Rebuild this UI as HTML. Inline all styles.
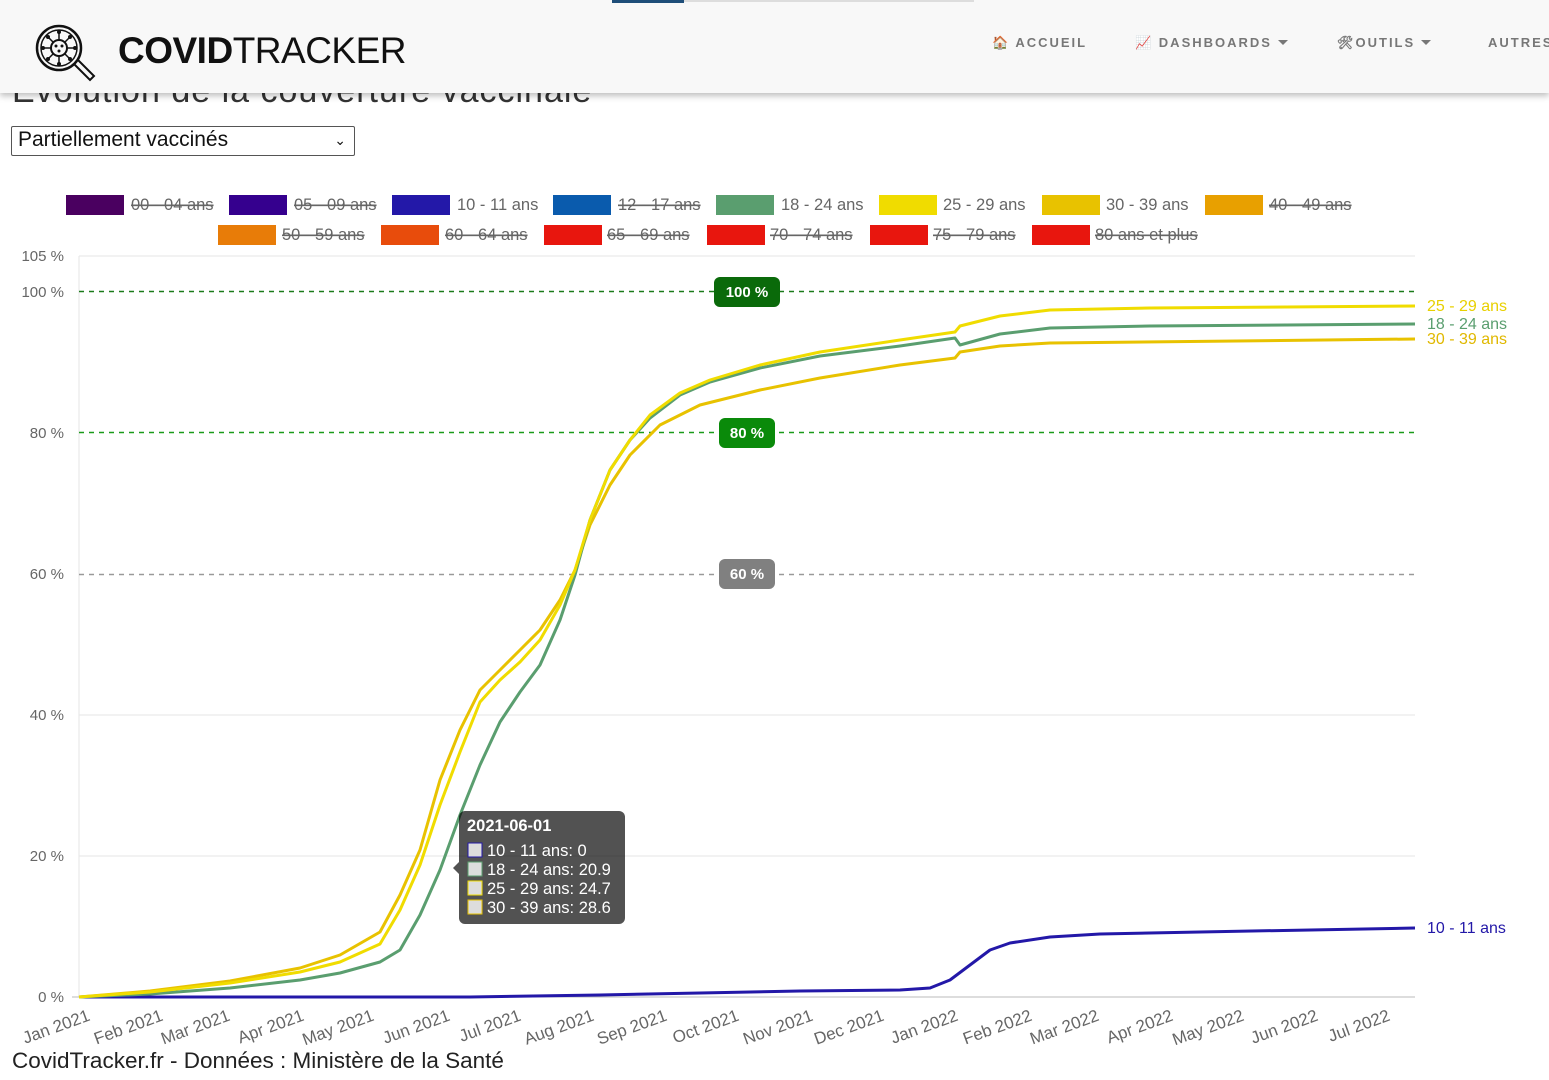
<!DOCTYPE html>
<html><head><meta charset="utf-8"><style>
body{margin:0;width:1549px;height:1080px;overflow:hidden;background:#fff;font-family:"Liberation Sans",sans-serif;position:relative}
.nav{position:absolute;left:0;top:0;width:1549px;height:93px;background:#f8f8f8;box-shadow:0 3px 6px rgba(0,0,0,.25);z-index:5}
.brand{position:absolute;left:118px;top:30px;font-size:37px;color:#111;letter-spacing:-0.5px}
.nl{position:absolute;top:35px;font-size:13px;font-weight:bold;letter-spacing:2px;color:#777}
.car{display:inline-block;width:0;height:0;border-left:5px solid transparent;border-right:5px solid transparent;border-top:5px solid #777;margin-left:6px;vertical-align:2px}
h1{position:absolute;left:12px;top:72px;margin:0;font-weight:normal;font-size:34px;color:#333;letter-spacing:1px}
.sel{position:absolute;left:11px;top:126px;width:344px;height:30px;border:1px solid #555;border-radius:2px;font-size:21px;color:#111;box-sizing:border-box;padding:1px 6px;background:#fff}
.foot{position:absolute;left:12px;top:1048px;font-size:22.5px;color:#222}
</style></head><body>
<div style="position:absolute;left:612px;top:0;width:72px;height:3px;background:#1f4e79;z-index:6"></div>
<div style="position:absolute;left:684px;top:0;width:290px;height:2px;background:#ddd;z-index:6"></div>
<div class="nav">
<svg style="position:absolute;left:32px;top:22px" width="64" height="60" viewBox="0 0 64 60">
<circle cx="27" cy="26" r="22" fill="none" stroke="#111" stroke-width="2.5"/>
<circle cx="27" cy="26" r="18" fill="none" stroke="#111" stroke-width="1.5"/>
<path d="M42 42 L58 58 L62 54 L46 38" fill="none" stroke="#111" stroke-width="2"/>
<circle cx="27" cy="26" r="8" fill="none" stroke="#111" stroke-width="2"/>
<g stroke="#111" stroke-width="1.5"><path d="M27 18V10M27 34V42M19 26H11M35 26H43M21 20L16 15M33 20L38 15M21 32L16 37M33 32L38 37"/></g>
<g fill="#111"><circle cx="27" cy="10" r="2"/><circle cx="27" cy="42" r="2"/><circle cx="11" cy="26" r="2"/><circle cx="43" cy="26" r="2"/><circle cx="16" cy="15" r="2"/><circle cx="38" cy="15" r="2"/><circle cx="16" cy="37" r="2"/><circle cx="38" cy="37" r="2"/><circle cx="24" cy="24" r="1.5"/><circle cx="30" cy="24" r="1.5"/><circle cx="27" cy="29" r="1.5"/></g>
</svg>
<div class="brand"><b>COVID</b>TRACKER</div>
<div class="nl" style="left:992px">🏠 ACCUEIL</div>
<div class="nl" style="left:1135px">📈 DASHBOARDS<span class="car"></span></div>
<div class="nl" style="left:1337px">🛠OUTILS<span class="car"></span></div>
<div class="nl" style="left:1488px">AUTRES</div>
</div>
<h1>Evolution de la couverture vaccinale</h1>
<div class="sel">Partiellement vaccinés<span style="position:absolute;right:8px;top:5px;font-size:14px">⌄</span></div>
<svg style="position:absolute;left:0;top:0" width="1549" height="1080" font-family="Liberation Sans, sans-serif">
<g font-size="16.5" fill="#666">
<rect x="66" y="195" width="58" height="20" fill="#4a0060"/><text x="131" y="210" text-decoration="line-through">00 - 04 ans</text>
<rect x="229" y="195" width="58" height="20" fill="#35008e"/><text x="294" y="210" text-decoration="line-through">05 - 09 ans</text>
<rect x="392" y="195" width="58" height="20" fill="#2318a8"/><text x="457" y="210">10 - 11 ans</text>
<rect x="553" y="195" width="58" height="20" fill="#0a5bad"/><text x="618" y="210" text-decoration="line-through">12 - 17 ans</text>
<rect x="716" y="195" width="58" height="20" fill="#5a9e6f"/><text x="781" y="210">18 - 24 ans</text>
<rect x="879" y="195" width="58" height="20" fill="#f0dc00"/><text x="943" y="210">25 - 29 ans</text>
<rect x="1042" y="195" width="58" height="20" fill="#e8c200"/><text x="1106" y="210">30 - 39 ans</text>
<rect x="1205" y="195" width="58" height="20" fill="#e8a000"/><text x="1269" y="210" text-decoration="line-through">40 - 49 ans</text>
<rect x="218" y="225" width="58" height="20" fill="#e87c08"/><text x="282" y="240" text-decoration="line-through">50 - 59 ans</text>
<rect x="381" y="225" width="58" height="20" fill="#e84c0c"/><text x="445" y="240" text-decoration="line-through">60 - 64 ans</text>
<rect x="544" y="225" width="58" height="20" fill="#e8160e"/><text x="607" y="240" text-decoration="line-through">65 - 69 ans</text>
<rect x="707" y="225" width="58" height="20" fill="#e8160e"/><text x="770" y="240" text-decoration="line-through">70 - 74 ans</text>
<rect x="870" y="225" width="58" height="20" fill="#e8160e"/><text x="933" y="240" text-decoration="line-through">75 - 79 ans</text>
<rect x="1032" y="225" width="58" height="20" fill="#e8160e"/><text x="1095" y="240" text-decoration="line-through">80 ans et plus</text>
</g>
<g stroke="#e6e6e6" stroke-width="1">
<line x1="79" y1="256" x2="1415" y2="256"/><line x1="79" y1="715" x2="1415" y2="715"/><line x1="79" y1="856" x2="1415" y2="856"/>
</g>
<line x1="79" y1="256" x2="79" y2="997" stroke="#e6e6e6"/>
<line x1="72" y1="997" x2="1415" y2="997" stroke="#bbb"/>
<g font-size="15" fill="#666" text-anchor="end">
<text x="64" y="261">105 %</text><text x="64" y="297">100 %</text><text x="64" y="438">80 %</text><text x="64" y="579">60 %</text><text x="64" y="720">40 %</text><text x="64" y="861">20 %</text><text x="64" y="1002">0 %</text>
</g>
<line x1="79" y1="291.5" x2="1415" y2="291.5" stroke="#1a7a1a" stroke-width="1.5" stroke-dasharray="5,5"/>
<line x1="79" y1="432.5" x2="1415" y2="432.5" stroke="#1a9a1a" stroke-width="1.5" stroke-dasharray="5,5"/>
<line x1="79" y1="574.5" x2="1415" y2="574.5" stroke="#999" stroke-width="1.5" stroke-dasharray="5,5"/>
<rect x="714" y="277" width="66" height="30" rx="6" fill="#0a6a0a"/><text x="747" y="297" fill="#fff" font-weight="bold" font-size="15" text-anchor="middle">100 %</text>
<rect x="719" y="418" width="56" height="30" rx="6" fill="#0a8a0a"/><text x="747" y="438" fill="#fff" font-weight="bold" font-size="15" text-anchor="middle">80 %</text>
<rect x="719" y="559" width="56" height="30" rx="6" fill="#808080"/><text x="747" y="579" fill="#fff" font-weight="bold" font-size="15" text-anchor="middle">60 %</text>
<g fill="none" stroke-width="3" stroke-linejoin="round">
<polyline stroke="#2318a8" points="79,997 470,997 600,995 700,993 800,991 900,990 930,988 950,980 970,965 990,950 1010,943 1050,937 1100,934 1200,932 1415,928"/>
<polyline stroke="#e8c200" points="79,997 150,991 230,981 300,968 340,955 380,932 400,895 420,850 440,780 460,730 480,690 500,670 520,650 540,630 560,600 575,570 590,525 610,485 630,455 660,425 700,405 760,390 820,378 900,365 955,358 960,352 1000,346 1050,343 1415,339"/>
<polyline stroke="#5a9e6f" points="79,997 150,994 230,988 300,980 340,973 380,962 400,950 420,915 440,870 460,815 480,765 500,722 520,692 540,665 560,620 575,575 590,520 610,470 630,440 650,418 680,395 710,382 760,368 820,356 900,346 955,338 960,345 1000,334 1050,328 1150,326 1415,324"/>
<polyline stroke="#f0dc00" points="79,997 150,992 230,983 300,972 340,962 380,944 400,910 420,865 440,805 460,752 480,702 500,680 520,662 540,640 560,605 575,570 590,520 610,470 630,440 650,415 680,393 710,380 760,365 820,352 900,340 955,332 960,326 1000,316 1050,310 1150,308 1415,306"/>
</g>
<g font-size="16">
<text x="1427" y="311" fill="#e8d000">25 - 29 ans</text>
<text x="1427" y="329" fill="#5a9e6f">18 - 24 ans</text>
<text x="1427" y="344" fill="#e0b800">30 - 39 ans</text>
<text x="1427" y="933" fill="#2318a8">10 - 11 ans</text>
</g>
<g font-size="17" fill="#666" text-anchor="end">
<text transform="translate(91,1020) rotate(-20)">Jan 2021</text>
<text transform="translate(164,1020) rotate(-20)">Feb 2021</text>
<text transform="translate(231,1020) rotate(-20)">Mar 2021</text>
<text transform="translate(305,1020) rotate(-20)">Apr 2021</text>
<text transform="translate(375,1020) rotate(-20)">May 2021</text>
<text transform="translate(451,1020) rotate(-20)">Jun 2021</text>
<text transform="translate(522,1020) rotate(-20)">Jul 2021</text>
<text transform="translate(595,1020) rotate(-20)">Aug 2021</text>
<text transform="translate(668,1020) rotate(-20)">Sep 2021</text>
<text transform="translate(740,1020) rotate(-20)">Oct 2021</text>
<text transform="translate(814,1020) rotate(-20)">Nov 2021</text>
<text transform="translate(885,1020) rotate(-20)">Dec 2021</text>
<text transform="translate(959,1020) rotate(-20)">Jan 2022</text>
<text transform="translate(1033,1020) rotate(-20)">Feb 2022</text>
<text transform="translate(1100,1020) rotate(-20)">Mar 2022</text>
<text transform="translate(1174,1020) rotate(-20)">Apr 2022</text>
<text transform="translate(1245,1020) rotate(-20)">May 2022</text>
<text transform="translate(1319,1020) rotate(-20)">Jun 2022</text>
<text transform="translate(1391,1020) rotate(-20)">Jul 2022</text>
</g>
<rect x="459" y="811" width="166" height="113" rx="6" fill="#000" fill-opacity="0.68"/>
<path d="M459 862 L453 868 L459 874Z" fill="#000" fill-opacity="0.68"/>
<g font-size="16.5" fill="#fff">
<text x="467" y="831" font-weight="bold">2021-06-01</text>
<rect x="468" y="843" width="14" height="14" fill="#ddd" stroke="#2318a8"/><text x="487" y="856">10 - 11 ans: 0</text>
<rect x="468" y="862" width="14" height="14" fill="#ddd" stroke="#5a9e6f"/><text x="487" y="875">18 - 24 ans: 20.9</text>
<rect x="468" y="881" width="14" height="14" fill="#ddd" stroke="#f0dc00"/><text x="487" y="894">25 - 29 ans: 24.7</text>
<rect x="468" y="900" width="14" height="14" fill="#ddd" stroke="#e8c200"/><text x="487" y="913">30 - 39 ans: 28.6</text>
</g>
</svg>
<div class="foot">CovidTracker.fr - Données : Ministère de la Santé</div>
</body></html>
